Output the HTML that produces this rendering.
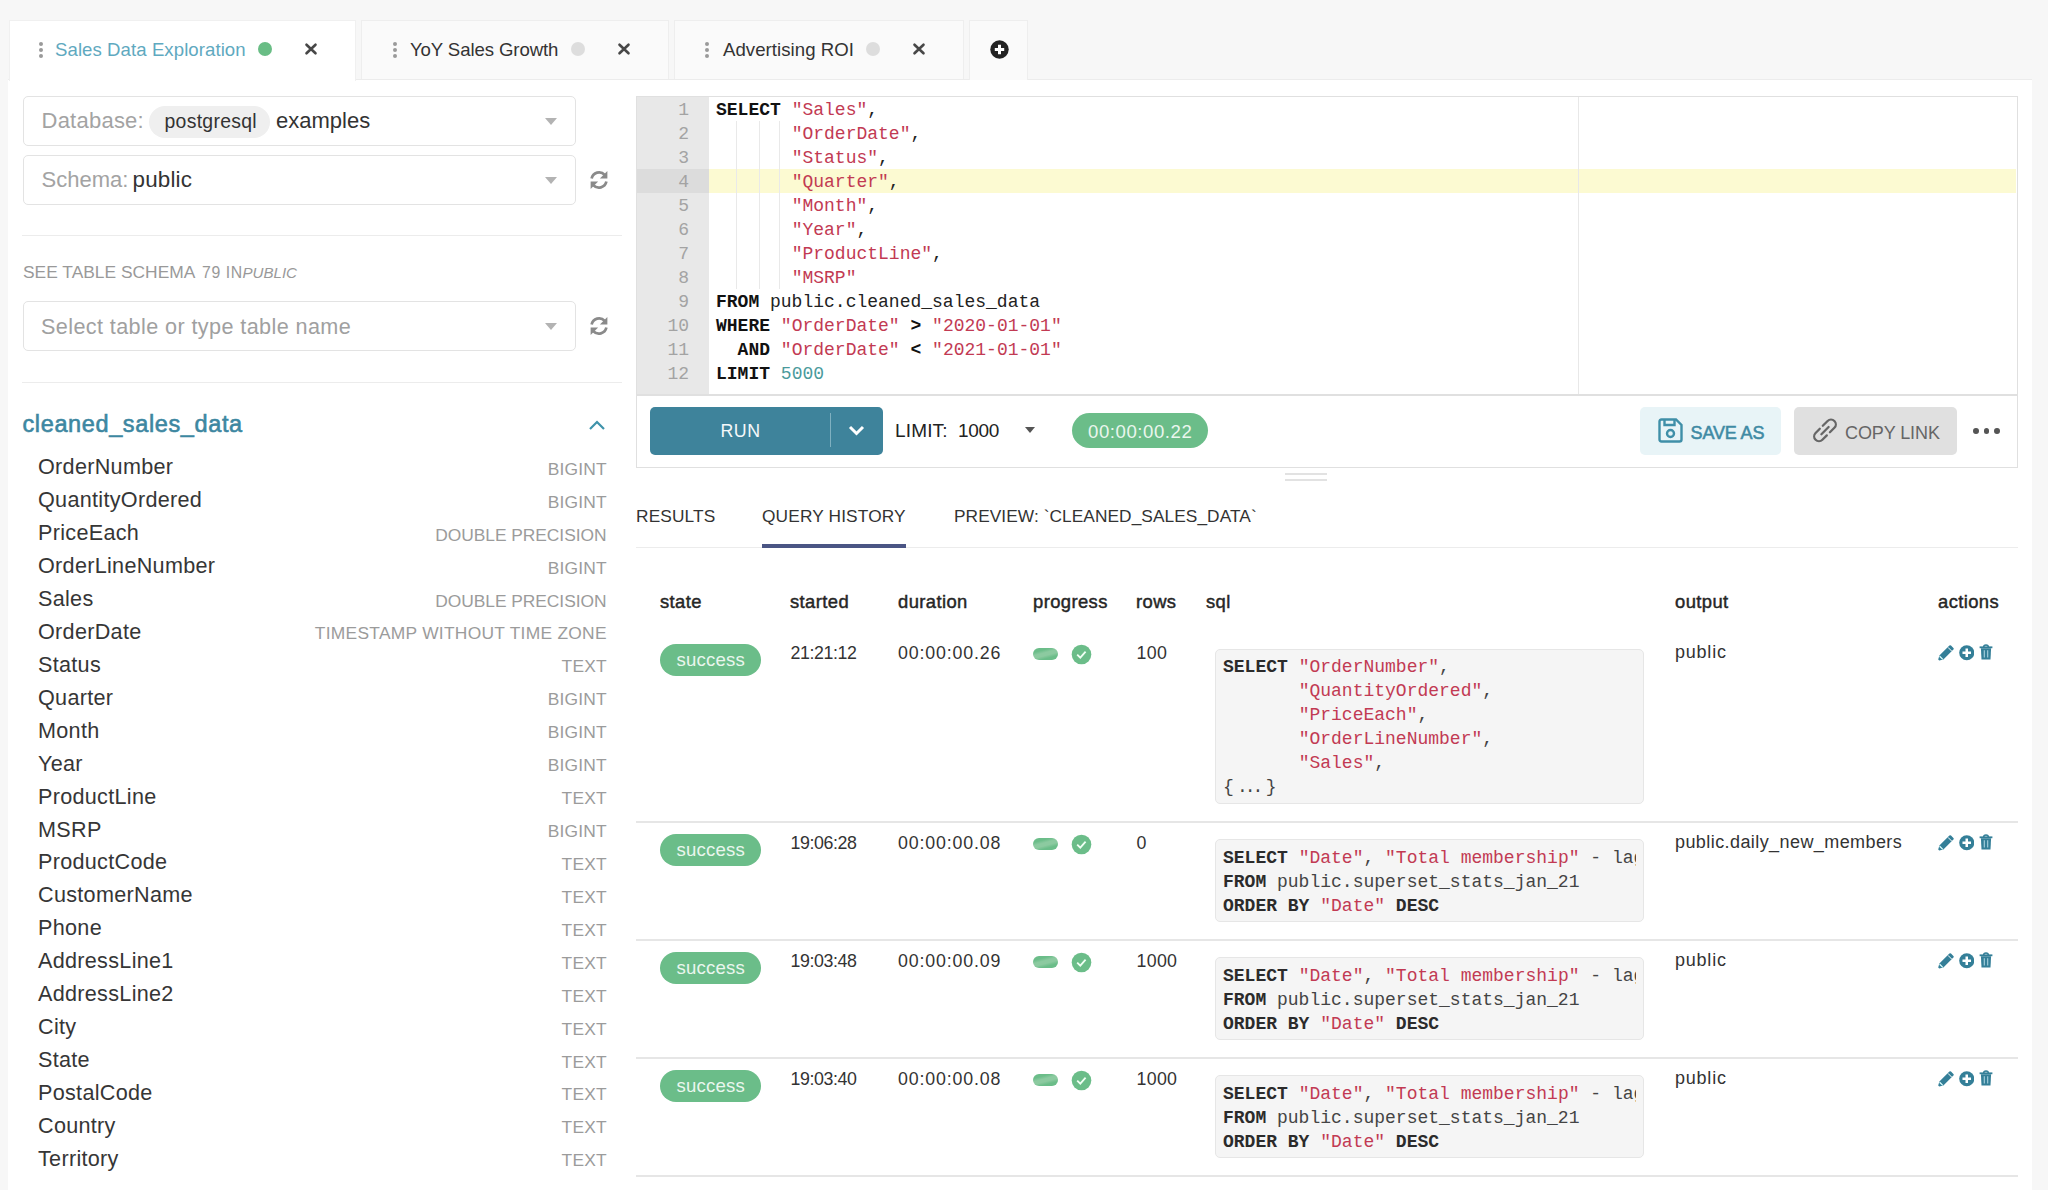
<!DOCTYPE html>
<html><head><meta charset="utf-8"><title>SQL Lab</title>
<style>
html,body{margin:0;padding:0;width:2048px;height:1190px;overflow:hidden;background:#f7f7f7}
.t{position:absolute;line-height:0;white-space:pre;font-family:'Liberation Sans', sans-serif}
.r{position:absolute}
b{font-weight:700}
</style></head><body>
<div class="r" style="left:0px;top:0px;width:2048px;height:1190px;background:#f7f7f7"></div>
<div class="r" style="left:8px;top:80px;width:2024px;height:1110px;background:#fff"></div>
<div class="r" style="left:8px;top:79px;width:2024px;height:1px;background:#ededed"></div>
<div class="r" style="left:9px;top:20px;width:347px;height:61px;background:#fff;border:1px solid #f0f0f0;border-bottom:none;box-sizing:border-box"></div>
<div class="r" style="left:39px;top:41.5px;width:4px;height:4px;border-radius:50%;background:#9a9a9a"></div>
<div class="r" style="left:39px;top:47.5px;width:4px;height:4px;border-radius:50%;background:#9a9a9a"></div>
<div class="r" style="left:39px;top:53.5px;width:4px;height:4px;border-radius:50%;background:#9a9a9a"></div>
<div class="t" style="left:55px;top:49.50px;font-size:18.6px;color:#5fa9c0;font-weight:400;font-style:normal;font-family:'Liberation Sans', sans-serif;letter-spacing:0.07px;">Sales Data Exploration</div>
<div class="r" style="left:257.8px;top:42.1px;width:14.4px;height:14.4px;border-radius:50%;background:#69bd85"></div>
<svg class="r" style="left:303.3px;top:41.3px" width="16" height="16" viewBox="0 0 16 16"><path d="M3.5 3.7L12.5 12.3M12.5 3.7L3.5 12.3" stroke="#474747" stroke-width="2.6" stroke-linecap="round"/></svg>
<div class="r" style="left:361px;top:20px;width:308px;height:60px;background:#fafafa;border:1px solid #eeeeee;border-bottom:none;box-sizing:border-box"></div>
<div class="r" style="left:392.5px;top:41.5px;width:4px;height:4px;border-radius:50%;background:#9a9a9a"></div>
<div class="r" style="left:392.5px;top:47.5px;width:4px;height:4px;border-radius:50%;background:#9a9a9a"></div>
<div class="r" style="left:392.5px;top:53.5px;width:4px;height:4px;border-radius:50%;background:#9a9a9a"></div>
<div class="t" style="left:410px;top:49.50px;font-size:18.6px;color:#333;font-weight:400;font-style:normal;font-family:'Liberation Sans', sans-serif;letter-spacing:-0.1px;">YoY Sales Growth</div>
<div class="r" style="left:570.8px;top:42.1px;width:14.4px;height:14.4px;border-radius:50%;background:#dddddd"></div>
<svg class="r" style="left:616px;top:41.3px" width="16" height="16" viewBox="0 0 16 16"><path d="M3.5 3.7L12.5 12.3M12.5 3.7L3.5 12.3" stroke="#474747" stroke-width="2.6" stroke-linecap="round"/></svg>
<div class="r" style="left:674px;top:20px;width:290px;height:60px;background:#fafafa;border:1px solid #eeeeee;border-bottom:none;box-sizing:border-box"></div>
<div class="r" style="left:705px;top:41.5px;width:4px;height:4px;border-radius:50%;background:#9a9a9a"></div>
<div class="r" style="left:705px;top:47.5px;width:4px;height:4px;border-radius:50%;background:#9a9a9a"></div>
<div class="r" style="left:705px;top:53.5px;width:4px;height:4px;border-radius:50%;background:#9a9a9a"></div>
<div class="t" style="left:723px;top:49.50px;font-size:18.6px;color:#333;font-weight:400;font-style:normal;font-family:'Liberation Sans', sans-serif;letter-spacing:0.05px;">Advertising ROI</div>
<div class="r" style="left:865.8px;top:42.1px;width:14.4px;height:14.4px;border-radius:50%;background:#dddddd"></div>
<svg class="r" style="left:911px;top:41.3px" width="16" height="16" viewBox="0 0 16 16"><path d="M3.5 3.7L12.5 12.3M12.5 3.7L3.5 12.3" stroke="#474747" stroke-width="2.6" stroke-linecap="round"/></svg>
<div class="r" style="left:356px;top:79px;width:1676px;height:1px;background:#ececec"></div>
<div class="r" style="left:969px;top:20px;width:59px;height:60px;background:#fafafa;border:1px solid #eeeeee;border-bottom:none;box-sizing:border-box"></div>
<svg class="r" style="left:989.5px;top:39.5px" width="19" height="19" viewBox="0 0 19 19"><circle cx="9.5" cy="9.5" r="9.2" fill="#222"/><path d="M9.5 4.8V14.2M4.8 9.5H14.2" stroke="#fff" stroke-width="3"/></svg>
<div class="r" style="left:23px;top:96px;width:553px;height:50px;border:1.5px solid #e3e3e3;border-radius:5px;box-sizing:border-box;background:#fff"></div>
<svg class="r" style="left:545px;top:117.5px" width="12" height="7" viewBox="0 0 12 7"><path d="M0 0H12L6 7Z" fill="#b3b3b3"/></svg>
<div class="t" style="left:41.5px;top:120.50px;font-size:22px;color:#a3a3a3;font-weight:400;font-style:normal;font-family:'Liberation Sans', sans-serif;letter-spacing:0.24px;">Database:</div>
<div class="r" style="left:149px;top:106px;width:121px;height:32px;background:#efefef;border-radius:16px"></div>
<div class="t" style="left:164.5px;top:121.00px;font-size:19.4px;color:#333;font-weight:400;font-style:normal;font-family:'Liberation Sans', sans-serif;letter-spacing:0.3px;">postgresql</div>
<div class="t" style="left:276px;top:120.50px;font-size:22px;color:#333;font-weight:400;font-style:normal;font-family:'Liberation Sans', sans-serif;">examples</div>
<div class="r" style="left:23px;top:155px;width:553px;height:50px;border:1.5px solid #e3e3e3;border-radius:5px;box-sizing:border-box;background:#fff"></div>
<svg class="r" style="left:545px;top:176.5px" width="12" height="7" viewBox="0 0 12 7"><path d="M0 0H12L6 7Z" fill="#b3b3b3"/></svg>
<div class="t" style="left:41.5px;top:179.50px;font-size:22px;color:#a3a3a3;font-weight:400;font-style:normal;font-family:'Liberation Sans', sans-serif;">Schema:</div>
<div class="t" style="left:132.5px;top:179.50px;font-size:22.4px;color:#333;font-weight:400;font-style:normal;font-family:'Liberation Sans', sans-serif;letter-spacing:0.18px;">public</div>
<svg class="r" style="left:588px;top:168.5px" width="22" height="22" viewBox="0 0 20 20"><g fill="none" stroke="#8a8a8a" stroke-width="2.5"><path d="M3.3 8.6A6.9 6.9 0 0 1 15.2 5.4"/><path d="M16.7 11.4A6.9 6.9 0 0 1 4.8 14.6"/></g><path d="M17.6 1.8V8.6H10.8Z" fill="#8a8a8a"/><path d="M2.4 18.2V11.4H9.2Z" fill="#8a8a8a"/></svg>
<div class="r" style="left:22px;top:235px;width:600px;height:1px;background:#ececec"></div>
<div class="t" style="left:23px;top:272.00px;font-size:17.4px;color:#999;font-weight:400;font-style:normal;font-family:'Liberation Sans', sans-serif;">SEE TABLE SCHEMA</div>
<div class="t" style="left:202px;top:272.50px;font-size:15.8px;color:#999;font-weight:400;font-style:normal;font-family:'Liberation Sans', sans-serif;letter-spacing:0.6px;">79 IN</div>
<div class="t" style="left:242.5px;top:272.50px;font-size:15.1px;color:#999;font-weight:400;font-style:italic;font-family:'Liberation Sans', sans-serif;">PUBLIC</div>
<div class="r" style="left:23px;top:301px;width:553px;height:50px;border:1.5px solid #e3e3e3;border-radius:5px;box-sizing:border-box;background:#fff"></div>
<svg class="r" style="left:545px;top:322.5px" width="12" height="7" viewBox="0 0 12 7"><path d="M0 0H12L6 7Z" fill="#b3b3b3"/></svg>
<div class="t" style="left:41px;top:326.50px;font-size:21.6px;color:#a0a0a0;font-weight:400;font-style:normal;font-family:'Liberation Sans', sans-serif;letter-spacing:0.4px;">Select table or type table name</div>
<svg class="r" style="left:588px;top:315px" width="22" height="22" viewBox="0 0 20 20"><g fill="none" stroke="#8a8a8a" stroke-width="2.5"><path d="M3.3 8.6A6.9 6.9 0 0 1 15.2 5.4"/><path d="M16.7 11.4A6.9 6.9 0 0 1 4.8 14.6"/></g><path d="M17.6 1.8V8.6H10.8Z" fill="#8a8a8a"/><path d="M2.4 18.2V11.4H9.2Z" fill="#8a8a8a"/></svg>
<div class="r" style="left:22px;top:382px;width:600px;height:1px;background:#ececec"></div>
<div class="t" style="left:22.5px;top:424.00px;font-size:23.5px;color:#3d87a1;font-weight:400;font-style:normal;font-family:'Liberation Sans', sans-serif;letter-spacing:0.62px;-webkit-text-stroke:0.6px #3d87a1;">cleaned_sales_data</div>
<svg class="r" style="left:589px;top:420px" width="16" height="10" viewBox="0 0 16 10"><path d="M1 9L8 2L15 9" fill="none" stroke="#3f93ab" stroke-width="2.2"/></svg>
<div class="t" style="left:38px;top:466.50px;font-size:21.6px;color:#363636;font-weight:400;font-style:normal;font-family:'Liberation Sans', sans-serif;letter-spacing:0.3px;">OrderNumber</div>
<div class="t" style="right:1441.35px;top:469.00px;font-size:17.4px;color:#9b9b9b;font-weight:400;text-align:right;letter-spacing:0.15px;">BIGINT</div>
<div class="t" style="left:38px;top:499.50px;font-size:21.6px;color:#363636;font-weight:400;font-style:normal;font-family:'Liberation Sans', sans-serif;letter-spacing:0.3px;">QuantityOrdered</div>
<div class="t" style="right:1441.35px;top:502.00px;font-size:17.4px;color:#9b9b9b;font-weight:400;text-align:right;letter-spacing:0.15px;">BIGINT</div>
<div class="t" style="left:38px;top:532.50px;font-size:21.6px;color:#363636;font-weight:400;font-style:normal;font-family:'Liberation Sans', sans-serif;letter-spacing:0.3px;">PriceEach</div>
<div class="t" style="right:1441.55px;top:535.00px;font-size:17.4px;color:#9b9b9b;font-weight:400;text-align:right;letter-spacing:-0.05px;">DOUBLE PRECISION</div>
<div class="t" style="left:38px;top:565.50px;font-size:21.6px;color:#363636;font-weight:400;font-style:normal;font-family:'Liberation Sans', sans-serif;letter-spacing:0.3px;">OrderLineNumber</div>
<div class="t" style="right:1441.35px;top:568.00px;font-size:17.4px;color:#9b9b9b;font-weight:400;text-align:right;letter-spacing:0.15px;">BIGINT</div>
<div class="t" style="left:38px;top:598.50px;font-size:21.6px;color:#363636;font-weight:400;font-style:normal;font-family:'Liberation Sans', sans-serif;letter-spacing:0.3px;">Sales</div>
<div class="t" style="right:1441.55px;top:601.00px;font-size:17.4px;color:#9b9b9b;font-weight:400;text-align:right;letter-spacing:-0.05px;">DOUBLE PRECISION</div>
<div class="t" style="left:38px;top:631.50px;font-size:21.6px;color:#363636;font-weight:400;font-style:normal;font-family:'Liberation Sans', sans-serif;letter-spacing:0.3px;">OrderDate</div>
<div class="t" style="right:1441.23px;top:633.00px;font-size:17.4px;color:#9b9b9b;font-weight:400;text-align:right;letter-spacing:0.27px;">TIMESTAMP WITHOUT TIME ZONE</div>
<div class="t" style="left:38px;top:664.50px;font-size:21.6px;color:#363636;font-weight:400;font-style:normal;font-family:'Liberation Sans', sans-serif;letter-spacing:0.3px;">Status</div>
<div class="t" style="right:1441.35px;top:666.00px;font-size:17.4px;color:#9b9b9b;font-weight:400;text-align:right;letter-spacing:0.15px;">TEXT</div>
<div class="t" style="left:38px;top:697.50px;font-size:21.6px;color:#363636;font-weight:400;font-style:normal;font-family:'Liberation Sans', sans-serif;letter-spacing:0.3px;">Quarter</div>
<div class="t" style="right:1441.35px;top:699.00px;font-size:17.4px;color:#9b9b9b;font-weight:400;text-align:right;letter-spacing:0.15px;">BIGINT</div>
<div class="t" style="left:38px;top:730.50px;font-size:21.6px;color:#363636;font-weight:400;font-style:normal;font-family:'Liberation Sans', sans-serif;letter-spacing:0.3px;">Month</div>
<div class="t" style="right:1441.35px;top:732.00px;font-size:17.4px;color:#9b9b9b;font-weight:400;text-align:right;letter-spacing:0.15px;">BIGINT</div>
<div class="t" style="left:38px;top:763.50px;font-size:21.6px;color:#363636;font-weight:400;font-style:normal;font-family:'Liberation Sans', sans-serif;letter-spacing:0.3px;">Year</div>
<div class="t" style="right:1441.35px;top:765.00px;font-size:17.4px;color:#9b9b9b;font-weight:400;text-align:right;letter-spacing:0.15px;">BIGINT</div>
<div class="t" style="left:38px;top:796.50px;font-size:21.6px;color:#363636;font-weight:400;font-style:normal;font-family:'Liberation Sans', sans-serif;letter-spacing:0.3px;">ProductLine</div>
<div class="t" style="right:1441.35px;top:798.00px;font-size:17.4px;color:#9b9b9b;font-weight:400;text-align:right;letter-spacing:0.15px;">TEXT</div>
<div class="t" style="left:38px;top:829.50px;font-size:21.6px;color:#363636;font-weight:400;font-style:normal;font-family:'Liberation Sans', sans-serif;letter-spacing:0.3px;">MSRP</div>
<div class="t" style="right:1441.35px;top:831.00px;font-size:17.4px;color:#9b9b9b;font-weight:400;text-align:right;letter-spacing:0.15px;">BIGINT</div>
<div class="t" style="left:38px;top:861.50px;font-size:21.6px;color:#363636;font-weight:400;font-style:normal;font-family:'Liberation Sans', sans-serif;letter-spacing:0.3px;">ProductCode</div>
<div class="t" style="right:1441.35px;top:864.00px;font-size:17.4px;color:#9b9b9b;font-weight:400;text-align:right;letter-spacing:0.15px;">TEXT</div>
<div class="t" style="left:38px;top:894.50px;font-size:21.6px;color:#363636;font-weight:400;font-style:normal;font-family:'Liberation Sans', sans-serif;letter-spacing:0.3px;">CustomerName</div>
<div class="t" style="right:1441.35px;top:897.00px;font-size:17.4px;color:#9b9b9b;font-weight:400;text-align:right;letter-spacing:0.15px;">TEXT</div>
<div class="t" style="left:38px;top:927.50px;font-size:21.6px;color:#363636;font-weight:400;font-style:normal;font-family:'Liberation Sans', sans-serif;letter-spacing:0.3px;">Phone</div>
<div class="t" style="right:1441.35px;top:930.00px;font-size:17.4px;color:#9b9b9b;font-weight:400;text-align:right;letter-spacing:0.15px;">TEXT</div>
<div class="t" style="left:38px;top:960.50px;font-size:21.6px;color:#363636;font-weight:400;font-style:normal;font-family:'Liberation Sans', sans-serif;letter-spacing:0.3px;">AddressLine1</div>
<div class="t" style="right:1441.35px;top:963.00px;font-size:17.4px;color:#9b9b9b;font-weight:400;text-align:right;letter-spacing:0.15px;">TEXT</div>
<div class="t" style="left:38px;top:993.50px;font-size:21.6px;color:#363636;font-weight:400;font-style:normal;font-family:'Liberation Sans', sans-serif;letter-spacing:0.3px;">AddressLine2</div>
<div class="t" style="right:1441.35px;top:996.00px;font-size:17.4px;color:#9b9b9b;font-weight:400;text-align:right;letter-spacing:0.15px;">TEXT</div>
<div class="t" style="left:38px;top:1026.50px;font-size:21.6px;color:#363636;font-weight:400;font-style:normal;font-family:'Liberation Sans', sans-serif;letter-spacing:0.3px;">City</div>
<div class="t" style="right:1441.35px;top:1029.00px;font-size:17.4px;color:#9b9b9b;font-weight:400;text-align:right;letter-spacing:0.15px;">TEXT</div>
<div class="t" style="left:38px;top:1059.50px;font-size:21.6px;color:#363636;font-weight:400;font-style:normal;font-family:'Liberation Sans', sans-serif;letter-spacing:0.3px;">State</div>
<div class="t" style="right:1441.35px;top:1062.00px;font-size:17.4px;color:#9b9b9b;font-weight:400;text-align:right;letter-spacing:0.15px;">TEXT</div>
<div class="t" style="left:38px;top:1092.50px;font-size:21.6px;color:#363636;font-weight:400;font-style:normal;font-family:'Liberation Sans', sans-serif;letter-spacing:0.3px;">PostalCode</div>
<div class="t" style="right:1441.35px;top:1094.00px;font-size:17.4px;color:#9b9b9b;font-weight:400;text-align:right;letter-spacing:0.15px;">TEXT</div>
<div class="t" style="left:38px;top:1125.50px;font-size:21.6px;color:#363636;font-weight:400;font-style:normal;font-family:'Liberation Sans', sans-serif;letter-spacing:0.3px;">Country</div>
<div class="t" style="right:1441.35px;top:1127.00px;font-size:17.4px;color:#9b9b9b;font-weight:400;text-align:right;letter-spacing:0.15px;">TEXT</div>
<div class="t" style="left:38px;top:1158.50px;font-size:21.6px;color:#363636;font-weight:400;font-style:normal;font-family:'Liberation Sans', sans-serif;letter-spacing:0.3px;">Territory</div>
<div class="t" style="right:1441.35px;top:1160.00px;font-size:17.4px;color:#9b9b9b;font-weight:400;text-align:right;letter-spacing:0.15px;">TEXT</div>
<div class="r" style="left:636px;top:96px;width:1382px;height:372px;border:1.5px solid #e0e0e0;box-sizing:border-box;background:#fff"></div>
<div class="r" style="left:637px;top:97px;width:72px;height:297px;background:#e8e8e8"></div>
<div class="r" style="left:637px;top:169px;width:72px;height:24px;background:#dcdcdc"></div>
<div class="r" style="left:709px;top:169px;width:1307px;height:24px;background:#fcfad2"></div>
<div class="r" style="left:1578px;top:97px;width:1px;height:297px;background:#e8e8e8"></div>
<div class="r" style="left:636px;top:394px;width:1382px;height:1.5px;background:#e0e0e0"></div>
<div class="r" style="left:735.5px;top:121px;width:1px;height:168px;background:#e9e9e9"></div>
<div class="r" style="left:758.5px;top:121px;width:1px;height:168px;background:#e9e9e9"></div>
<div class="r" style="left:779px;top:121px;width:1px;height:168px;background:#e9e9e9"></div>
<div class="t" style="left:716px;top:110.00px;font-size:18px;color:#222;font-weight:400;font-style:normal;font-family:'Liberation Mono', monospace;"><b style="color:#111">SELECT</b> <span style="color:#c23a53">"Sales"</span>,</div>
<div class="t" style="left:678.2px;top:110.00px;font-size:18px;color:#a3a3a3;font-weight:400;font-style:normal;font-family:'Liberation Mono', monospace;">1</div>
<div class="t" style="left:716px;top:134.00px;font-size:18px;color:#222;font-weight:400;font-style:normal;font-family:'Liberation Mono', monospace;">       <span style="color:#c23a53">"OrderDate"</span>,</div>
<div class="t" style="left:678.2px;top:134.00px;font-size:18px;color:#a3a3a3;font-weight:400;font-style:normal;font-family:'Liberation Mono', monospace;">2</div>
<div class="t" style="left:716px;top:158.00px;font-size:18px;color:#222;font-weight:400;font-style:normal;font-family:'Liberation Mono', monospace;">       <span style="color:#c23a53">"Status"</span>,</div>
<div class="t" style="left:678.2px;top:158.00px;font-size:18px;color:#a3a3a3;font-weight:400;font-style:normal;font-family:'Liberation Mono', monospace;">3</div>
<div class="t" style="left:716px;top:182.00px;font-size:18px;color:#222;font-weight:400;font-style:normal;font-family:'Liberation Mono', monospace;">       <span style="color:#c23a53">"Quarter"</span>,</div>
<div class="t" style="left:678.2px;top:182.00px;font-size:18px;color:#a3a3a3;font-weight:400;font-style:normal;font-family:'Liberation Mono', monospace;">4</div>
<div class="t" style="left:716px;top:206.00px;font-size:18px;color:#222;font-weight:400;font-style:normal;font-family:'Liberation Mono', monospace;">       <span style="color:#c23a53">"Month"</span>,</div>
<div class="t" style="left:678.2px;top:206.00px;font-size:18px;color:#a3a3a3;font-weight:400;font-style:normal;font-family:'Liberation Mono', monospace;">5</div>
<div class="t" style="left:716px;top:230.00px;font-size:18px;color:#222;font-weight:400;font-style:normal;font-family:'Liberation Mono', monospace;">       <span style="color:#c23a53">"Year"</span>,</div>
<div class="t" style="left:678.2px;top:230.00px;font-size:18px;color:#a3a3a3;font-weight:400;font-style:normal;font-family:'Liberation Mono', monospace;">6</div>
<div class="t" style="left:716px;top:254.00px;font-size:18px;color:#222;font-weight:400;font-style:normal;font-family:'Liberation Mono', monospace;">       <span style="color:#c23a53">"ProductLine"</span>,</div>
<div class="t" style="left:678.2px;top:254.00px;font-size:18px;color:#a3a3a3;font-weight:400;font-style:normal;font-family:'Liberation Mono', monospace;">7</div>
<div class="t" style="left:716px;top:278.00px;font-size:18px;color:#222;font-weight:400;font-style:normal;font-family:'Liberation Mono', monospace;">       <span style="color:#c23a53">"MSRP"</span></div>
<div class="t" style="left:678.2px;top:278.00px;font-size:18px;color:#a3a3a3;font-weight:400;font-style:normal;font-family:'Liberation Mono', monospace;">8</div>
<div class="t" style="left:716px;top:302.00px;font-size:18px;color:#222;font-weight:400;font-style:normal;font-family:'Liberation Mono', monospace;"><b style="color:#111">FROM</b> public.cleaned_sales_data</div>
<div class="t" style="left:678.2px;top:302.00px;font-size:18px;color:#a3a3a3;font-weight:400;font-style:normal;font-family:'Liberation Mono', monospace;">9</div>
<div class="t" style="left:716px;top:326.00px;font-size:18px;color:#222;font-weight:400;font-style:normal;font-family:'Liberation Mono', monospace;"><b style="color:#111">WHERE</b> <span style="color:#c23a53">"OrderDate"</span> <b style="color:#111">&gt;</b> <span style="color:#c23a53">"2020-01-01"</span></div>
<div class="t" style="left:667.4px;top:326.00px;font-size:18px;color:#a3a3a3;font-weight:400;font-style:normal;font-family:'Liberation Mono', monospace;">10</div>
<div class="t" style="left:716px;top:350.00px;font-size:18px;color:#222;font-weight:400;font-style:normal;font-family:'Liberation Mono', monospace;">  <b style="color:#111">AND</b> <span style="color:#c23a53">"OrderDate"</span> <b style="color:#111">&lt;</b> <span style="color:#c23a53">"2021-01-01"</span></div>
<div class="t" style="left:667.4px;top:350.00px;font-size:18px;color:#a3a3a3;font-weight:400;font-style:normal;font-family:'Liberation Mono', monospace;">11</div>
<div class="t" style="left:716px;top:374.00px;font-size:18px;color:#222;font-weight:400;font-style:normal;font-family:'Liberation Mono', monospace;"><b style="color:#111">LIMIT</b> <span style="color:#4a9a9c">5000</span></div>
<div class="t" style="left:667.4px;top:374.00px;font-size:18px;color:#a3a3a3;font-weight:400;font-style:normal;font-family:'Liberation Mono', monospace;">12</div>
<div class="r" style="left:650px;top:407px;width:233px;height:48px;background:#3e839b;border-radius:5px"></div>
<div class="r" style="left:830px;top:413px;width:1px;height:34px;background:#7fb0c0"></div>
<div class="t" style="left:720.5px;top:431.00px;font-size:17.8px;color:#f4f8fa;font-weight:400;font-style:normal;font-family:'Liberation Sans', sans-serif;letter-spacing:0.5px;">RUN</div>
<svg class="r" style="left:847.5px;top:425px" width="17" height="11" viewBox="0 0 17 11"><path d="M2 2L8.5 8.5L15 2" fill="none" stroke="#fff" stroke-width="3"/></svg>
<div class="t" style="left:895px;top:430.50px;font-size:19px;color:#222;font-weight:400;font-style:normal;font-family:'Liberation Sans', sans-serif;letter-spacing:0.16px;">LIMIT:</div>
<div class="t" style="left:958px;top:430.50px;font-size:19px;color:#222;font-weight:400;font-style:normal;font-family:'Liberation Sans', sans-serif;letter-spacing:-0.3px;">1000</div>
<svg class="r" style="left:1025px;top:427px" width="10" height="6" viewBox="0 0 10 6"><path d="M0 0H10L5 6Z" fill="#555"/></svg>
<div class="r" style="left:1072px;top:413px;width:136px;height:35px;background:#6bbd89;border-radius:17.5px"></div>
<div class="t" style="left:1088px;top:431.50px;font-size:18.6px;color:#eaf6ee;font-weight:400;font-style:normal;font-family:'Liberation Sans', sans-serif;letter-spacing:0.55px;">00:00:00.22</div>
<div class="r" style="left:1640px;top:407px;width:141px;height:48px;background:#e8f4f7;border-radius:5px"></div>
<svg class="r" style="left:1657px;top:417px" width="27" height="27" viewBox="0 0 27 27"><g fill="none" stroke="#3f8fa8" stroke-width="2.4"><path d="M2.5 4.5Q2.5 2.5 4.5 2.5H19L24.5 8V22.5Q24.5 24.5 22.5 24.5H4.5Q2.5 24.5 2.5 22.5Z"/><path d="M7.5 2.5V8H17.5V2.5"/><circle cx="13.5" cy="16.5" r="3.5"/></g></svg>
<div class="t" style="left:1690.5px;top:433.00px;font-size:18px;color:#3f8aa4;font-weight:400;font-style:normal;font-family:'Liberation Sans', sans-serif;letter-spacing:-0.13px;-webkit-text-stroke:0.55px #3f8aa4;">SAVE AS</div>
<div class="r" style="left:1794px;top:407px;width:163px;height:48px;background:#e0e0e0;border-radius:5px"></div>
<svg class="r" style="left:1805px;top:410px" width="40" height="40" viewBox="0 0 40 40"><g fill="none" stroke="#666" stroke-width="2.3" stroke-linecap="round"><path d="M17.8 15.8L22.6 11A4.8 4.8 0 0 1 29.4 17.8L24.9 22.3"/><path d="M14.8 18.8L10.6 23A4.8 4.8 0 0 0 17.4 29.8L21.8 25.4"/><path d="M16.4 24.2L23.6 17"/></g></svg>
<div class="t" style="left:1845px;top:433.00px;font-size:18px;color:#666;font-weight:400;font-style:normal;font-family:'Liberation Sans', sans-serif;letter-spacing:-0.1px;">COPY LINK</div>
<div class="r" style="left:1972.8px;top:428.1px;width:5.8px;height:5.8px;border-radius:50%;background:#555"></div>
<div class="r" style="left:1983.6px;top:428.1px;width:5.8px;height:5.8px;border-radius:50%;background:#555"></div>
<div class="r" style="left:1994.3999999999999px;top:428.1px;width:5.8px;height:5.8px;border-radius:50%;background:#555"></div>
<div class="r" style="left:1285px;top:473px;width:42px;height:1.5px;background:#e2e2e2"></div>
<div class="r" style="left:1285px;top:479px;width:42px;height:1.5px;background:#e2e2e2"></div>
<div class="t" style="left:636px;top:516.00px;font-size:17.3px;color:#333;font-weight:400;font-style:normal;font-family:'Liberation Sans', sans-serif;letter-spacing:0.15px;">RESULTS</div>
<div class="t" style="left:762px;top:516.00px;font-size:17.3px;color:#333;font-weight:400;font-style:normal;font-family:'Liberation Sans', sans-serif;letter-spacing:0.15px;">QUERY HISTORY</div>
<div class="t" style="left:954px;top:516.00px;font-size:17.3px;color:#333;font-weight:400;font-style:normal;font-family:'Liberation Sans', sans-serif;letter-spacing:0.075px;">PREVIEW: `CLEANED_SALES_DATA`</div>
<div class="r" style="left:636px;top:546.5px;width:1382px;height:1.5px;background:#ececec"></div>
<div class="r" style="left:762px;top:544px;width:144px;height:3.5px;background:#4a5584"></div>
<div class="t" style="left:660px;top:601.50px;font-size:18.4px;color:#262626;font-weight:400;font-style:normal;font-family:'Liberation Sans', sans-serif;letter-spacing:0.4px;-webkit-text-stroke:0.45px #262626;">state</div>
<div class="t" style="left:790px;top:601.50px;font-size:18.4px;color:#262626;font-weight:400;font-style:normal;font-family:'Liberation Sans', sans-serif;letter-spacing:0.4px;-webkit-text-stroke:0.45px #262626;">started</div>
<div class="t" style="left:898px;top:601.50px;font-size:18.4px;color:#262626;font-weight:400;font-style:normal;font-family:'Liberation Sans', sans-serif;letter-spacing:0.4px;-webkit-text-stroke:0.45px #262626;">duration</div>
<div class="t" style="left:1033px;top:601.50px;font-size:18.4px;color:#262626;font-weight:400;font-style:normal;font-family:'Liberation Sans', sans-serif;letter-spacing:0.4px;-webkit-text-stroke:0.45px #262626;">progress</div>
<div class="t" style="left:1136px;top:601.50px;font-size:18.4px;color:#262626;font-weight:400;font-style:normal;font-family:'Liberation Sans', sans-serif;letter-spacing:0.4px;-webkit-text-stroke:0.45px #262626;">rows</div>
<div class="t" style="left:1206px;top:601.50px;font-size:18.4px;color:#262626;font-weight:400;font-style:normal;font-family:'Liberation Sans', sans-serif;letter-spacing:0.4px;-webkit-text-stroke:0.45px #262626;">sql</div>
<div class="t" style="left:1675px;top:601.50px;font-size:18.4px;color:#262626;font-weight:400;font-style:normal;font-family:'Liberation Sans', sans-serif;letter-spacing:0.4px;-webkit-text-stroke:0.45px #262626;">output</div>
<div class="t" style="left:1938px;top:601.50px;font-size:18.4px;color:#262626;font-weight:400;font-style:normal;font-family:'Liberation Sans', sans-serif;letter-spacing:0.4px;-webkit-text-stroke:0.45px #262626;">actions</div>
<div class="r" style="left:660px;top:643.7px;width:100.5px;height:32.7px;background:#6bbd89;border-radius:16.4px"></div>
<div class="t" style="left:676.5px;top:659.50px;font-size:18.6px;color:#eaf6ee;font-weight:400;font-style:normal;font-family:'Liberation Sans', sans-serif;letter-spacing:0.2px;">success</div>
<div class="t" style="left:790.5px;top:653.00px;font-size:17.8px;color:#333;font-weight:400;font-style:normal;font-family:'Liberation Sans', sans-serif;letter-spacing:-0.41px;">21:21:12</div>
<div class="t" style="left:898px;top:653.00px;font-size:17.8px;color:#333;font-weight:400;font-style:normal;font-family:'Liberation Sans', sans-serif;letter-spacing:0.85px;">00:00:00.26</div>
<div class="r" style="left:1033px;top:648px;width:25px;height:12.3px;background:linear-gradient(165deg,#6bbd89 25%,#8ccaa0 42%,#8ccaa0 58%,#6bbd89 75%);border-radius:6.2px"></div>
<svg class="r" style="left:1070.5px;top:643.5px" width="21" height="21" viewBox="0 0 21 21"><circle cx="10.5" cy="10.5" r="9.8" fill="#6bbd89"/><path d="M6.2 10.6L9.3 13.6L14.6 7.6" fill="none" stroke="#f0fff4" stroke-width="1.8"/></svg>
<div class="t" style="left:1136.5px;top:653.00px;font-size:17.8px;color:#333;font-weight:400;font-style:normal;font-family:'Liberation Sans', sans-serif;letter-spacing:0.3px;">100</div>
<div class="r" style="left:1215px;top:648.5px;width:429px;height:155px;background:#f5f5f5;border:1.5px solid #e6e6e6;border-radius:5px;box-sizing:border-box"></div>
<div class="r" style="left:1215px;top:648.5px;width:421px;height:155px;overflow:hidden">
<div class="t" style="left:8px;top:18.50px;font-size:18px;color:#444;font-family:'Liberation Mono', monospace"><b style="color:#2b2b2b">SELECT</b> <span style="color:#c23a53">"OrderNumber"</span>,</div>
<div class="t" style="left:8px;top:42.50px;font-size:18px;color:#444;font-family:'Liberation Mono', monospace">       <span style="color:#c23a53">"QuantityOrdered"</span>,</div>
<div class="t" style="left:8px;top:66.50px;font-size:18px;color:#444;font-family:'Liberation Mono', monospace">       <span style="color:#c23a53">"PriceEach"</span>,</div>
<div class="t" style="left:8px;top:90.50px;font-size:18px;color:#444;font-family:'Liberation Mono', monospace">       <span style="color:#c23a53">"OrderLineNumber"</span>,</div>
<div class="t" style="left:8px;top:114.50px;font-size:18px;color:#444;font-family:'Liberation Mono', monospace">       <span style="color:#c23a53">"Sales"</span>,</div>
<div class="t" style="left:8px;top:138.50px;font-size:18px;color:#444;font-family:'Liberation Mono', monospace">{<span style="display:inline-block;margin-left:3.2px;letter-spacing:-3px">...</span><span style="margin-left:5.3px">}</span></div>
</div>
<div class="t" style="left:1675px;top:652.00px;font-size:18px;color:#333;font-weight:400;font-style:normal;font-family:'Liberation Sans', sans-serif;letter-spacing:0.78px;">public</div>
<svg class="r" style="left:1937px;top:644.8px" width="18" height="16" viewBox="0 0 18 16"><path d="M2.2 15.5L1.2 14.5L2.4 10.6L12.4 0.6Q13.2 -0.2 14 0.6L16.4 3Q17.2 3.8 16.4 4.6L6.4 14.6Z" fill="#347f98"/><path d="M11 2.4L14.6 6" stroke="#fff" stroke-width="1"/><path d="M2.6 11.2L5.8 14.4" stroke="#dff" stroke-width="1.3"/></svg>
<svg class="r" style="left:1958.5px;top:645.1999999999999px" width="15.5" height="15.5" viewBox="0 0 16 16"><circle cx="8" cy="8" r="7.8" fill="#347f98"/><path d="M8 3.6V12.4M3.6 8H12.4" stroke="#fff" stroke-width="2.6"/></svg>
<svg class="r" style="left:1978.5px;top:644.3px" width="14" height="16" viewBox="0 0 14 16"><path d="M0.6 3.3H13.4" stroke="#347f98" stroke-width="1.8"/><path d="M4.6 3.2Q4.6 0.9 7 0.9Q9.4 0.9 9.4 3.2" fill="none" stroke="#347f98" stroke-width="1.5"/><path d="M1.9 4.3H12.1L11.5 15.6H2.5Z" fill="#347f98"/><path d="M5.3 6.2V13.6M8.7 6.2V13.6" stroke="#a9d2df" stroke-width="1.1"/></svg>
<div class="r" style="left:636px;top:821px;width:1382px;height:1.5px;background:#e6e6e6"></div>
<div class="r" style="left:660px;top:833.7px;width:100.5px;height:32.7px;background:#6bbd89;border-radius:16.4px"></div>
<div class="t" style="left:676.5px;top:849.50px;font-size:18.6px;color:#eaf6ee;font-weight:400;font-style:normal;font-family:'Liberation Sans', sans-serif;letter-spacing:0.2px;">success</div>
<div class="t" style="left:790.5px;top:843.00px;font-size:17.8px;color:#333;font-weight:400;font-style:normal;font-family:'Liberation Sans', sans-serif;letter-spacing:-0.41px;">19:06:28</div>
<div class="t" style="left:898px;top:843.00px;font-size:17.8px;color:#333;font-weight:400;font-style:normal;font-family:'Liberation Sans', sans-serif;letter-spacing:0.85px;">00:00:00.08</div>
<div class="r" style="left:1033px;top:838px;width:25px;height:12.3px;background:linear-gradient(165deg,#6bbd89 25%,#8ccaa0 42%,#8ccaa0 58%,#6bbd89 75%);border-radius:6.2px"></div>
<svg class="r" style="left:1070.5px;top:833.5px" width="21" height="21" viewBox="0 0 21 21"><circle cx="10.5" cy="10.5" r="9.8" fill="#6bbd89"/><path d="M6.2 10.6L9.3 13.6L14.6 7.6" fill="none" stroke="#f0fff4" stroke-width="1.8"/></svg>
<div class="t" style="left:1136.5px;top:843.00px;font-size:17.8px;color:#333;font-weight:400;font-style:normal;font-family:'Liberation Sans', sans-serif;letter-spacing:0.3px;">0</div>
<div class="r" style="left:1215px;top:839px;width:429px;height:82.5px;background:#f5f5f5;border:1.5px solid #e6e6e6;border-radius:5px;box-sizing:border-box"></div>
<div class="r" style="left:1215px;top:839px;width:421px;height:82.5px;overflow:hidden">
<div class="t" style="left:8px;top:19.00px;font-size:18px;color:#444;font-family:'Liberation Mono', monospace"><b style="color:#2b2b2b">SELECT</b> <span style="color:#c23a53">"Date"</span>, <span style="color:#c23a53">"Total membership"</span> - lag(</div>
<div class="t" style="left:8px;top:43.00px;font-size:18px;color:#444;font-family:'Liberation Mono', monospace"><b style="color:#2b2b2b">FROM</b> public.superset_stats_jan_21</div>
<div class="t" style="left:8px;top:67.00px;font-size:18px;color:#444;font-family:'Liberation Mono', monospace"><b style="color:#2b2b2b">ORDER BY</b> <span style="color:#c23a53">"Date"</span> <b style="color:#2b2b2b">DESC</b></div>
</div>
<div class="t" style="left:1675px;top:842.00px;font-size:18px;color:#333;font-weight:400;font-style:normal;font-family:'Liberation Sans', sans-serif;letter-spacing:0.42px;">public.daily_new_members</div>
<svg class="r" style="left:1937px;top:834.8px" width="18" height="16" viewBox="0 0 18 16"><path d="M2.2 15.5L1.2 14.5L2.4 10.6L12.4 0.6Q13.2 -0.2 14 0.6L16.4 3Q17.2 3.8 16.4 4.6L6.4 14.6Z" fill="#347f98"/><path d="M11 2.4L14.6 6" stroke="#fff" stroke-width="1"/><path d="M2.6 11.2L5.8 14.4" stroke="#dff" stroke-width="1.3"/></svg>
<svg class="r" style="left:1958.5px;top:835.1999999999999px" width="15.5" height="15.5" viewBox="0 0 16 16"><circle cx="8" cy="8" r="7.8" fill="#347f98"/><path d="M8 3.6V12.4M3.6 8H12.4" stroke="#fff" stroke-width="2.6"/></svg>
<svg class="r" style="left:1978.5px;top:834.3px" width="14" height="16" viewBox="0 0 14 16"><path d="M0.6 3.3H13.4" stroke="#347f98" stroke-width="1.8"/><path d="M4.6 3.2Q4.6 0.9 7 0.9Q9.4 0.9 9.4 3.2" fill="none" stroke="#347f98" stroke-width="1.5"/><path d="M1.9 4.3H12.1L11.5 15.6H2.5Z" fill="#347f98"/><path d="M5.3 6.2V13.6M8.7 6.2V13.6" stroke="#a9d2df" stroke-width="1.1"/></svg>
<div class="r" style="left:636px;top:939px;width:1382px;height:1.5px;background:#e6e6e6"></div>
<div class="r" style="left:660px;top:951.7px;width:100.5px;height:32.7px;background:#6bbd89;border-radius:16.4px"></div>
<div class="t" style="left:676.5px;top:967.50px;font-size:18.6px;color:#eaf6ee;font-weight:400;font-style:normal;font-family:'Liberation Sans', sans-serif;letter-spacing:0.2px;">success</div>
<div class="t" style="left:790.5px;top:961.00px;font-size:17.8px;color:#333;font-weight:400;font-style:normal;font-family:'Liberation Sans', sans-serif;letter-spacing:-0.41px;">19:03:48</div>
<div class="t" style="left:898px;top:961.00px;font-size:17.8px;color:#333;font-weight:400;font-style:normal;font-family:'Liberation Sans', sans-serif;letter-spacing:0.85px;">00:00:00.09</div>
<div class="r" style="left:1033px;top:956px;width:25px;height:12.3px;background:linear-gradient(165deg,#6bbd89 25%,#8ccaa0 42%,#8ccaa0 58%,#6bbd89 75%);border-radius:6.2px"></div>
<svg class="r" style="left:1070.5px;top:951.5px" width="21" height="21" viewBox="0 0 21 21"><circle cx="10.5" cy="10.5" r="9.8" fill="#6bbd89"/><path d="M6.2 10.6L9.3 13.6L14.6 7.6" fill="none" stroke="#f0fff4" stroke-width="1.8"/></svg>
<div class="t" style="left:1136.5px;top:961.00px;font-size:17.8px;color:#333;font-weight:400;font-style:normal;font-family:'Liberation Sans', sans-serif;letter-spacing:0.3px;">1000</div>
<div class="r" style="left:1215px;top:957px;width:429px;height:82.5px;background:#f5f5f5;border:1.5px solid #e6e6e6;border-radius:5px;box-sizing:border-box"></div>
<div class="r" style="left:1215px;top:957px;width:421px;height:82.5px;overflow:hidden">
<div class="t" style="left:8px;top:19.00px;font-size:18px;color:#444;font-family:'Liberation Mono', monospace"><b style="color:#2b2b2b">SELECT</b> <span style="color:#c23a53">"Date"</span>, <span style="color:#c23a53">"Total membership"</span> - lag(</div>
<div class="t" style="left:8px;top:43.00px;font-size:18px;color:#444;font-family:'Liberation Mono', monospace"><b style="color:#2b2b2b">FROM</b> public.superset_stats_jan_21</div>
<div class="t" style="left:8px;top:67.00px;font-size:18px;color:#444;font-family:'Liberation Mono', monospace"><b style="color:#2b2b2b">ORDER BY</b> <span style="color:#c23a53">"Date"</span> <b style="color:#2b2b2b">DESC</b></div>
</div>
<div class="t" style="left:1675px;top:960.00px;font-size:18px;color:#333;font-weight:400;font-style:normal;font-family:'Liberation Sans', sans-serif;letter-spacing:0.78px;">public</div>
<svg class="r" style="left:1937px;top:952.8px" width="18" height="16" viewBox="0 0 18 16"><path d="M2.2 15.5L1.2 14.5L2.4 10.6L12.4 0.6Q13.2 -0.2 14 0.6L16.4 3Q17.2 3.8 16.4 4.6L6.4 14.6Z" fill="#347f98"/><path d="M11 2.4L14.6 6" stroke="#fff" stroke-width="1"/><path d="M2.6 11.2L5.8 14.4" stroke="#dff" stroke-width="1.3"/></svg>
<svg class="r" style="left:1958.5px;top:953.1999999999999px" width="15.5" height="15.5" viewBox="0 0 16 16"><circle cx="8" cy="8" r="7.8" fill="#347f98"/><path d="M8 3.6V12.4M3.6 8H12.4" stroke="#fff" stroke-width="2.6"/></svg>
<svg class="r" style="left:1978.5px;top:952.3px" width="14" height="16" viewBox="0 0 14 16"><path d="M0.6 3.3H13.4" stroke="#347f98" stroke-width="1.8"/><path d="M4.6 3.2Q4.6 0.9 7 0.9Q9.4 0.9 9.4 3.2" fill="none" stroke="#347f98" stroke-width="1.5"/><path d="M1.9 4.3H12.1L11.5 15.6H2.5Z" fill="#347f98"/><path d="M5.3 6.2V13.6M8.7 6.2V13.6" stroke="#a9d2df" stroke-width="1.1"/></svg>
<div class="r" style="left:636px;top:1057px;width:1382px;height:1.5px;background:#e6e6e6"></div>
<div class="r" style="left:660px;top:1069.7px;width:100.5px;height:32.7px;background:#6bbd89;border-radius:16.4px"></div>
<div class="t" style="left:676.5px;top:1085.50px;font-size:18.6px;color:#eaf6ee;font-weight:400;font-style:normal;font-family:'Liberation Sans', sans-serif;letter-spacing:0.2px;">success</div>
<div class="t" style="left:790.5px;top:1079.00px;font-size:17.8px;color:#333;font-weight:400;font-style:normal;font-family:'Liberation Sans', sans-serif;letter-spacing:-0.41px;">19:03:40</div>
<div class="t" style="left:898px;top:1079.00px;font-size:17.8px;color:#333;font-weight:400;font-style:normal;font-family:'Liberation Sans', sans-serif;letter-spacing:0.85px;">00:00:00.08</div>
<div class="r" style="left:1033px;top:1074px;width:25px;height:12.3px;background:linear-gradient(165deg,#6bbd89 25%,#8ccaa0 42%,#8ccaa0 58%,#6bbd89 75%);border-radius:6.2px"></div>
<svg class="r" style="left:1070.5px;top:1069.5px" width="21" height="21" viewBox="0 0 21 21"><circle cx="10.5" cy="10.5" r="9.8" fill="#6bbd89"/><path d="M6.2 10.6L9.3 13.6L14.6 7.6" fill="none" stroke="#f0fff4" stroke-width="1.8"/></svg>
<div class="t" style="left:1136.5px;top:1079.00px;font-size:17.8px;color:#333;font-weight:400;font-style:normal;font-family:'Liberation Sans', sans-serif;letter-spacing:0.3px;">1000</div>
<div class="r" style="left:1215px;top:1075px;width:429px;height:82.5px;background:#f5f5f5;border:1.5px solid #e6e6e6;border-radius:5px;box-sizing:border-box"></div>
<div class="r" style="left:1215px;top:1075px;width:421px;height:82.5px;overflow:hidden">
<div class="t" style="left:8px;top:19.00px;font-size:18px;color:#444;font-family:'Liberation Mono', monospace"><b style="color:#2b2b2b">SELECT</b> <span style="color:#c23a53">"Date"</span>, <span style="color:#c23a53">"Total membership"</span> - lag(</div>
<div class="t" style="left:8px;top:43.00px;font-size:18px;color:#444;font-family:'Liberation Mono', monospace"><b style="color:#2b2b2b">FROM</b> public.superset_stats_jan_21</div>
<div class="t" style="left:8px;top:67.00px;font-size:18px;color:#444;font-family:'Liberation Mono', monospace"><b style="color:#2b2b2b">ORDER BY</b> <span style="color:#c23a53">"Date"</span> <b style="color:#2b2b2b">DESC</b></div>
</div>
<div class="t" style="left:1675px;top:1078.00px;font-size:18px;color:#333;font-weight:400;font-style:normal;font-family:'Liberation Sans', sans-serif;letter-spacing:0.78px;">public</div>
<svg class="r" style="left:1937px;top:1070.8px" width="18" height="16" viewBox="0 0 18 16"><path d="M2.2 15.5L1.2 14.5L2.4 10.6L12.4 0.6Q13.2 -0.2 14 0.6L16.4 3Q17.2 3.8 16.4 4.6L6.4 14.6Z" fill="#347f98"/><path d="M11 2.4L14.6 6" stroke="#fff" stroke-width="1"/><path d="M2.6 11.2L5.8 14.4" stroke="#dff" stroke-width="1.3"/></svg>
<svg class="r" style="left:1958.5px;top:1071.2px" width="15.5" height="15.5" viewBox="0 0 16 16"><circle cx="8" cy="8" r="7.8" fill="#347f98"/><path d="M8 3.6V12.4M3.6 8H12.4" stroke="#fff" stroke-width="2.6"/></svg>
<svg class="r" style="left:1978.5px;top:1070.3px" width="14" height="16" viewBox="0 0 14 16"><path d="M0.6 3.3H13.4" stroke="#347f98" stroke-width="1.8"/><path d="M4.6 3.2Q4.6 0.9 7 0.9Q9.4 0.9 9.4 3.2" fill="none" stroke="#347f98" stroke-width="1.5"/><path d="M1.9 4.3H12.1L11.5 15.6H2.5Z" fill="#347f98"/><path d="M5.3 6.2V13.6M8.7 6.2V13.6" stroke="#a9d2df" stroke-width="1.1"/></svg>
<div class="r" style="left:636px;top:1175px;width:1382px;height:1.5px;background:#e6e6e6"></div>
</body></html>
